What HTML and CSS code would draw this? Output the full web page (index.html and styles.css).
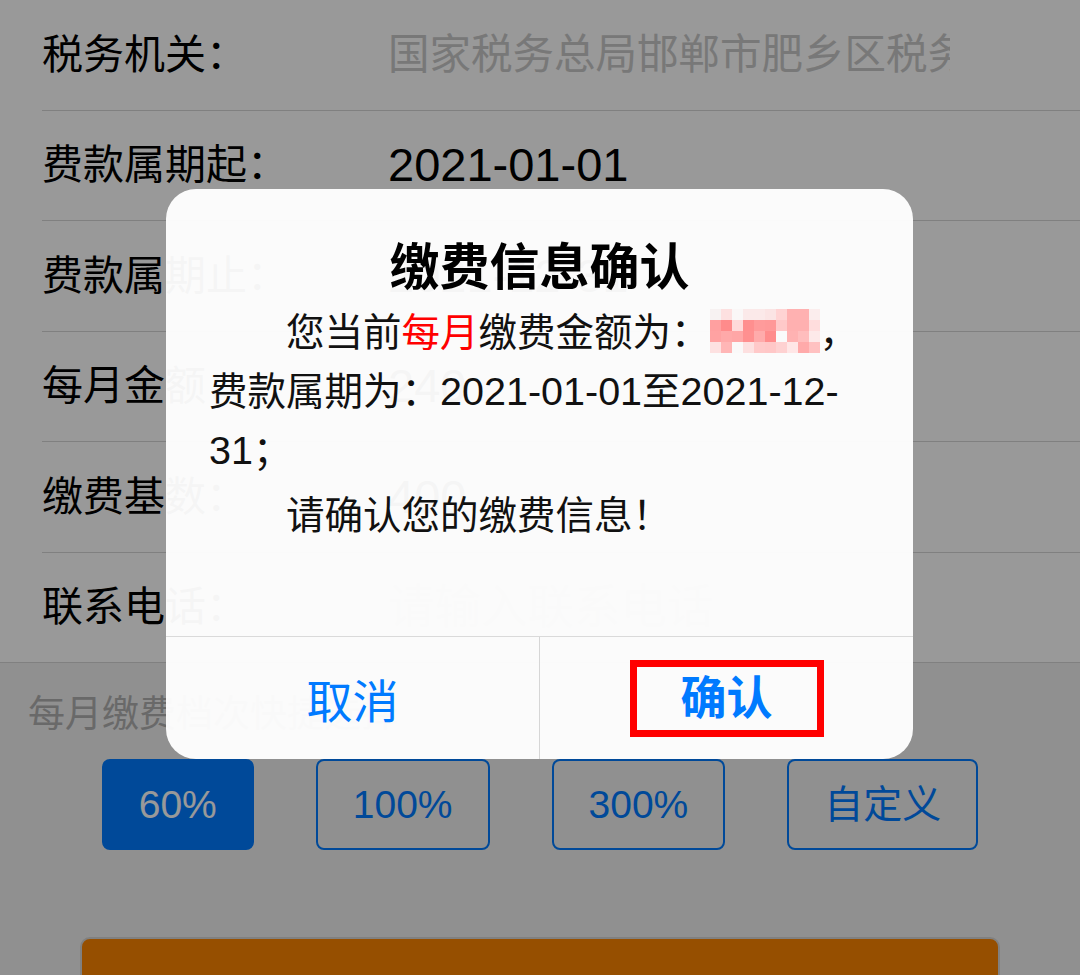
FILE: index.html
```html
<!DOCTYPE html>
<html lang="zh-CN">
<head>
    <meta charset="UTF-8">
    <meta name="viewport" content="width=device-width, initial-scale=1.0">
    <title>缴费信息确认</title>
    <link rel="stylesheet" href="styles.css">
</head>
<body>
    <div class="form">
        <div class="row first">
            <div class="label">税务机关：</div>
            <div class="value org">国家税务总局邯郸市肥乡区税务局</div>
        </div>
        <div class="row">
            <div class="label">费款属期起：</div>
            <div class="value date">2021-01-01</div>
        </div>
        <div class="row">
            <div class="label">费款属期止：</div>
            <div class="value date">2021-12-31</div>
        </div>
        <div class="row">
            <div class="label">每月金额：</div>
            <div class="value date">240</div>
        </div>
        <div class="row">
            <div class="label">缴费基数：</div>
            <div class="value date">400</div>
        </div>
        <div class="row last">
            <div class="label">联系电话：</div>
            <div class="value hint">请输入联系电话</div>
        </div>
    </div>

    <div class="levels">
        <div class="levels-title">每月缴费档次快捷选择</div>
        <div class="level-list">
            <div class="level active">60%</div>
            <div class="level">100%</div>
            <div class="level">300%</div>
            <div class="level">自定义</div>
        </div>
        <div class="submit"></div>
    </div>

    <div class="mask"></div>

    <div class="dialog">
        <div class="dialog-body">
            <div class="dialog-title">缴费信息确认</div>
            <p class="msg">您当前<span class="red">每月</span>缴费金额为：<svg class="mosaic" width="110" height="44" viewBox="0 0 110 44">
                <rect x="0" y="0" width="11" height="11" fill="#f7f2f2"/>
                <rect x="11" y="0" width="11" height="11" fill="#fde0e0"/>
                <rect x="22" y="0" width="11" height="11" fill="#faf7f7"/>
                <rect x="33" y="0" width="11" height="11" fill="#fbe9e9"/>
                <rect x="44" y="0" width="11" height="11" fill="#fbe9e9"/>
                <rect x="55" y="0" width="11" height="11" fill="#fbe4e4"/>
                <rect x="66" y="0" width="11" height="11" fill="#ffd3d3"/>
                <rect x="77" y="0" width="11" height="11" fill="#ffb1b1"/>
                <rect x="88" y="0" width="11" height="11" fill="#ffb1b1"/>
                <rect x="99" y="0" width="11" height="11" fill="#fbeded"/>
                <rect x="0" y="11" width="11" height="11" fill="#ffa0a0"/>
                <rect x="11" y="11" width="11" height="11" fill="#ff8b8b"/>
                <rect x="22" y="11" width="11" height="11" fill="#ffd9d9"/>
                <rect x="33" y="11" width="11" height="11" fill="#ff8f8f"/>
                <rect x="44" y="11" width="11" height="11" fill="#ff9b9b"/>
                <rect x="55" y="11" width="11" height="11" fill="#ff9999"/>
                <rect x="66" y="11" width="11" height="11" fill="#ffc9c9"/>
                <rect x="77" y="11" width="11" height="11" fill="#ffb0b0"/>
                <rect x="88" y="11" width="11" height="11" fill="#ffb0b0"/>
                <rect x="99" y="11" width="11" height="11" fill="#ffdddd"/>
                <rect x="0" y="22" width="11" height="11" fill="#ffa2a2"/>
                <rect x="11" y="22" width="11" height="11" fill="#ffa9a9"/>
                <rect x="22" y="22" width="11" height="11" fill="#ffa6a6"/>
                <rect x="33" y="22" width="11" height="11" fill="#ff9090"/>
                <rect x="44" y="22" width="11" height="11" fill="#ffabab"/>
                <rect x="55" y="22" width="11" height="11" fill="#ff8c8c"/>
                <rect x="66" y="22" width="11" height="11" fill="#fafafa"/>
                <rect x="77" y="22" width="11" height="11" fill="#ffb2b2"/>
                <rect x="88" y="22" width="11" height="11" fill="#ffbdbd"/>
                <rect x="99" y="22" width="11" height="11" fill="#fde9e9"/>
                <rect x="0" y="33" width="11" height="11" fill="#fde1e1"/>
                <rect x="11" y="33" width="11" height="11" fill="#ffb6b6"/>
                <rect x="22" y="33" width="11" height="11" fill="#faf9f9"/>
                <rect x="33" y="33" width="11" height="11" fill="#fde0e0"/>
                <rect x="44" y="33" width="11" height="11" fill="#ffc9c9"/>
                <rect x="55" y="33" width="11" height="11" fill="#ffc7c7"/>
                <rect x="66" y="33" width="11" height="11" fill="#fed1d1"/>
                <rect x="77" y="33" width="11" height="11" fill="#ffe6e6"/>
                <rect x="88" y="33" width="11" height="11" fill="#ffaaaa"/>
                <rect x="99" y="33" width="11" height="11" fill="#ffc1c1"/>
            </svg>，<br>费款属期为：<span class="num">2021-01-01</span>至<span class="num">2021-12-</span><br><span class="num">31</span>；</p>
            <p class="msg">请确认您的缴费信息！</p>
        </div>
        <div class="dialog-buttons">
            <div class="dialog-btn">取消</div>
            <div class="dialog-btn ok"><span class="mark">确认</span></div>
        </div>
    </div>
</body>
</html>
```

FILE: styles.css
```css
body {
    margin: 0;
    width: 1080px;
    height: 975px;
    overflow: hidden;
    position: relative;
    background-color: #f0f0f0;
    font-family: "Liberation Sans", "Noto Sans CJK SC", sans-serif;
    color: #000;
}
.form {
    background-color: #fff;
    border-bottom: 1px solid #d6d6d6;
}
.row {
    margin-left: 42px;
    height: 109.5px;
    border-bottom: 1px solid #d6d6d6;
    display: flex;
    align-items: center;
}
.row.last {
    border-bottom: none;
}
.label {
    width: 346px;
    font-size: 41px;
    line-height: 50px;
    white-space: nowrap;
}
.value {
    line-height: 56px;
    white-space: nowrap;
    overflow: hidden;
}
.value.org {
    width: 562px;
    font-size: 41.5px;
    color: #c8c8c8;
}
.value.date {
    font-size: 47px;
}
.value.hint {
    font-size: 46.5px;
    color: #c8c8c8;
}
.levels {
    padding-top: 27px;
}
.levels-title {
    padding-left: 28px;
    font-size: 37px;
    line-height: 50px;
    color: #b0b0b0;
}
.level-list {
    margin-top: 19px;
    display: flex;
    justify-content: center;
    gap: 62px;
}
.level {
    height: 87px;
    line-height: 87px;
    padding: 0 35px;
    border: 2px solid #007bff;
    border-radius: 8px;
    color: #007bff;
    font-size: 39px;
}
.level.active {
    background-color: #007bff;
    color: #fff;
}
.submit {
    margin: 87px 80px 0;
    height: 110px;
    border: 2px solid #d6d6d6;
    border-radius: 10px;
    background-color: #fa8400;
}
.mask {
    position: absolute;
    left: 0;
    top: 0;
    right: 0;
    bottom: 0;
    background-color: rgba(0, 0, 0, 0.4);
}
.dialog {
    position: absolute;
    left: 166px;
    top: 189px;
    width: 747px;
    border-radius: 30px;
    background-color: rgba(255, 255, 255, 0.96);
    overflow: hidden;
}
.dialog-body {
    padding: 49px 43px 91px;
}
.dialog-title {
    font-size: 50px;
    font-weight: bold;
    line-height: 60px;
    text-align: center;
    margin-bottom: 6px;
}
.msg {
    margin: 0;
    font-size: 38.5px;
    line-height: 58px;
    text-indent: 2em;
    color: #111;
}
.msg + .msg {
    margin-top: 7px;
}
.num {
    font-size: 39.5px;
}
.red {
    color: #ff0000;
}
.mosaic {
    vertical-align: top;
    margin-top: 5px;
}
.dialog-buttons {
    display: flex;
    border-top: 1px solid #dadada;
    height: 122px;
}
.dialog-btn {
    flex: 1;
    display: flex;
    align-items: center;
    justify-content: center;
    font-size: 46px;
    color: #007aff;
}
.dialog-btn + .dialog-btn {
    border-left: 1px solid #d6d6d6;
}
.dialog-btn.ok {
    font-weight: bold;
}
.mark {
    border: 7px solid #ff0000;
    padding: 0 44px;
    line-height: 63px;
}
```
